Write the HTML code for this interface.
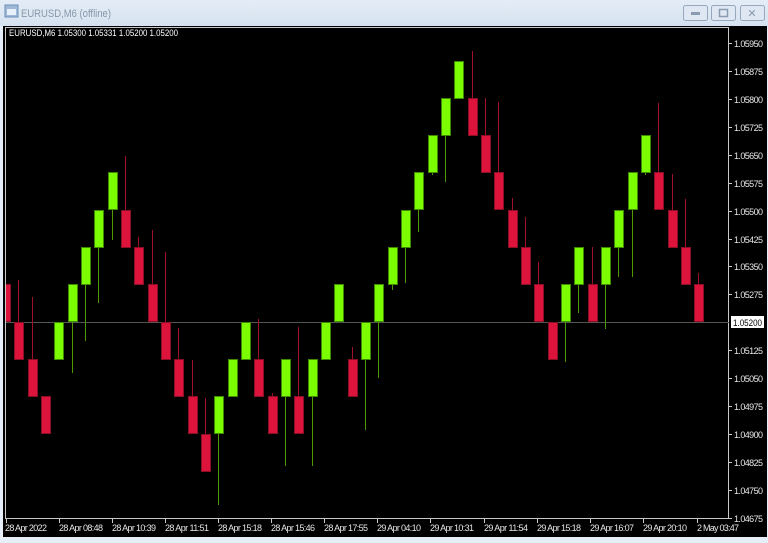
<!DOCTYPE html>
<html><head><meta charset="utf-8"><style>
html,body{margin:0;padding:0;background:#e6eef7;}
svg{display:block;}
text{font-family:"Liberation Sans",sans-serif;}
</style></head><body>
<svg width="768" height="543" viewBox="0 0 768 543" xmlns="http://www.w3.org/2000/svg">
<defs><linearGradient id="tb" x1="0" y1="0" x2="0" y2="1"><stop offset="0" stop-color="#e4edf7"/><stop offset="1" stop-color="#d6e2ef"/></linearGradient>
<clipPath id="pc"><rect x="6" y="28" width="723" height="491"/></clipPath></defs>
<rect x="0" y="0" width="768" height="543" fill="#e6eef7"/>
<rect x="0" y="0" width="768" height="26" fill="url(#tb)"/>
<rect x="5" y="5" width="13" height="12" fill="#9fb8d6" stroke="#6b8fb8" stroke-width="1"/>
<rect x="7" y="9" width="9" height="6" fill="#e8f0fa"/>
<text x="21" y="17" font-size="11" fill="#8797a8" textLength="90" lengthAdjust="spacingAndGlyphs">EURUSD,M6 (offline)</text>
<g fill="#dfe8f2" stroke="#98a9bd">
<rect x="683.5" y="5.5" width="24" height="15" rx="2"/><rect x="711.5" y="5.5" width="24" height="15" rx="2"/><rect x="740.5" y="5.5" width="24" height="15" rx="2"/></g>
<rect x="691" y="12" width="9" height="3" fill="#8a9ab0"/>
<rect x="719.5" y="9.5" width="8" height="7" fill="none" stroke="#8a9ab0" stroke-width="1.5"/>
<text x="752" y="17" font-size="11" fill="#8a9ab0" text-anchor="middle">✕</text>
<rect x="3" y="26" width="764" height="511" fill="#000"/>
<rect x="5.5" y="27.5" width="723" height="491" fill="none" stroke="#c8c8c8"/>
<text x="9" y="36" font-size="9" fill="#ffffff" textLength="169" lengthAdjust="spacingAndGlyphs">EURUSD,M6  1.05300 1.05331 1.05200 1.05200</text>
<line x1="6" y1="322.5" x2="729" y2="322.5" stroke="#555"/>
<g clip-path="url(#pc)">
<g fill="#a0102a">
<rect x="18" y="280" width="1" height="42"/><rect x="32" y="297" width="1" height="62"/>
<rect x="125" y="156" width="1" height="54"/><rect x="138" y="237" width="1" height="10"/><rect x="152" y="230" width="1" height="54"/><rect x="165" y="252" width="1" height="70"/><rect x="178" y="328" width="1" height="31"/><rect x="192" y="360" width="1" height="36"/><rect x="205" y="398" width="1" height="36"/>
<rect x="258" y="319" width="1" height="40"/><rect x="272" y="393" width="1" height="3"/><rect x="298" y="327" width="1" height="69"/><rect x="352" y="347" width="1" height="12"/>
<rect x="472" y="51" width="1" height="47"/><rect x="485" y="98" width="1" height="37"/><rect x="498" y="102" width="1" height="70"/><rect x="512" y="198" width="1" height="12"/><rect x="525" y="217" width="1" height="30"/><rect x="538" y="262" width="1" height="22"/>
<rect x="592" y="247" width="1" height="37"/><rect x="658" y="103" width="1" height="69"/><rect x="672" y="174" width="1" height="36"/><rect x="685" y="199" width="1" height="48"/><rect x="698" y="273" width="1" height="11"/>
</g>
<g fill="#4f9a00">
<rect x="72" y="321" width="1" height="52"/><rect x="85" y="284" width="1" height="57"/><rect x="98" y="247" width="1" height="56"/><rect x="112" y="210" width="1" height="30"/>
<rect x="218" y="433" width="1" height="72"/><rect x="285" y="396" width="1" height="70"/><rect x="312" y="396" width="1" height="70"/><rect x="365" y="359" width="1" height="71"/><rect x="378" y="321" width="1" height="57"/>
<rect x="392" y="284" width="1" height="6"/><rect x="405" y="247" width="1" height="36"/><rect x="418" y="210" width="1" height="22"/><rect x="432" y="172" width="1" height="3"/><rect x="445" y="135" width="1" height="47"/>
<rect x="565" y="321" width="1" height="41"/><rect x="578" y="284" width="1" height="29"/><rect x="605" y="284" width="1" height="45"/><rect x="618" y="247" width="1" height="30"/><rect x="632" y="210" width="1" height="67"/><rect x="645" y="172" width="1" height="3"/>
</g>
<g fill="#dc143c" stroke="#8b0f26" stroke-width="1">
<rect x="1.5" y="284.5" width="9" height="37"/><rect x="14.5" y="322.5" width="9" height="37"/><rect x="28.5" y="359.5" width="9" height="37"/><rect x="41.5" y="396.5" width="9" height="37"/>
<rect x="121.5" y="210.5" width="9" height="37"/><rect x="134.5" y="247.5" width="9" height="37"/><rect x="148.5" y="284.5" width="9" height="37"/><rect x="161.5" y="322.5" width="9" height="37"/><rect x="174.5" y="359.5" width="9" height="37"/><rect x="188.5" y="396.5" width="9" height="37"/><rect x="201.5" y="434.5" width="9" height="37"/>
<rect x="254.5" y="359.5" width="9" height="37"/><rect x="268.5" y="396.5" width="9" height="37"/><rect x="294.5" y="396.5" width="9" height="37"/><rect x="348.5" y="359.5" width="9" height="37"/>
<rect x="468.5" y="98.5" width="9" height="37"/><rect x="481.5" y="135.5" width="9" height="37"/><rect x="494.5" y="172.5" width="9" height="37"/><rect x="508.5" y="210.5" width="9" height="37"/><rect x="521.5" y="247.5" width="9" height="37"/><rect x="534.5" y="284.5" width="9" height="37"/><rect x="548.5" y="322.5" width="9" height="37"/>
<rect x="588.5" y="284.5" width="9" height="37"/><rect x="654.5" y="172.5" width="9" height="37"/><rect x="668.5" y="210.5" width="9" height="37"/><rect x="681.5" y="247.5" width="9" height="37"/><rect x="694.5" y="284.5" width="9" height="37"/>
</g>
<g fill="#7cfc00" stroke="#3f8a00" stroke-width="1">
<rect x="54.5" y="322.5" width="9" height="37"/><rect x="68.5" y="284.5" width="9" height="37"/><rect x="81.5" y="247.5" width="9" height="37"/><rect x="94.5" y="210.5" width="9" height="37"/><rect x="108.5" y="172.5" width="9" height="37"/>
<rect x="214.5" y="396.5" width="9" height="37"/><rect x="228.5" y="359.5" width="9" height="37"/><rect x="241.5" y="322.5" width="9" height="37"/>
<rect x="281.5" y="359.5" width="9" height="37"/><rect x="308.5" y="359.5" width="9" height="37"/><rect x="321.5" y="322.5" width="9" height="37"/><rect x="334.5" y="284.5" width="9" height="37"/>
<rect x="361.5" y="322.5" width="9" height="37"/><rect x="374.5" y="284.5" width="9" height="37"/><rect x="388.5" y="247.5" width="9" height="37"/><rect x="401.5" y="210.5" width="9" height="37"/><rect x="414.5" y="172.5" width="9" height="37"/><rect x="428.5" y="135.5" width="9" height="37"/><rect x="441.5" y="98.5" width="9" height="37"/><rect x="454.5" y="61.5" width="9" height="37"/>
<rect x="561.5" y="284.5" width="9" height="37"/><rect x="574.5" y="247.5" width="9" height="37"/><rect x="601.5" y="247.5" width="9" height="37"/><rect x="614.5" y="210.5" width="9" height="37"/><rect x="628.5" y="172.5" width="9" height="37"/><rect x="641.5" y="135.5" width="9" height="37"/>
</g>
</g>
<g stroke="#c8c8c8">
<line x1="729" y1="43.5" x2="732" y2="43.5"/><line x1="729" y1="71.5" x2="732" y2="71.5"/><line x1="729" y1="99.5" x2="732" y2="99.5"/><line x1="729" y1="127.5" x2="732" y2="127.5"/><line x1="729" y1="155.5" x2="732" y2="155.5"/><line x1="729" y1="183.5" x2="732" y2="183.5"/><line x1="729" y1="211.5" x2="732" y2="211.5"/><line x1="729" y1="239.5" x2="732" y2="239.5"/><line x1="729" y1="266.5" x2="732" y2="266.5"/><line x1="729" y1="294.5" x2="732" y2="294.5"/><line x1="729" y1="350.5" x2="732" y2="350.5"/><line x1="729" y1="378.5" x2="732" y2="378.5"/><line x1="729" y1="406.5" x2="732" y2="406.5"/><line x1="729" y1="434.5" x2="732" y2="434.5"/><line x1="729" y1="462.5" x2="732" y2="462.5"/><line x1="729" y1="490.5" x2="732" y2="490.5"/><line x1="729" y1="518.5" x2="732" y2="518.5"/>
<line x1="6.5" y1="519" x2="6.5" y2="523"/><line x1="59.5" y1="519" x2="59.5" y2="523"/><line x1="112.5" y1="519" x2="112.5" y2="523"/><line x1="165.5" y1="519" x2="165.5" y2="523"/><line x1="218.5" y1="519" x2="218.5" y2="523"/><line x1="271.5" y1="519" x2="271.5" y2="523"/><line x1="324.5" y1="519" x2="324.5" y2="523"/><line x1="377.5" y1="519" x2="377.5" y2="523"/><line x1="430.5" y1="519" x2="430.5" y2="523"/><line x1="484.5" y1="519" x2="484.5" y2="523"/><line x1="537.5" y1="519" x2="537.5" y2="523"/><line x1="590.5" y1="519" x2="590.5" y2="523"/><line x1="643.5" y1="519" x2="643.5" y2="523"/><line x1="697.5" y1="519" x2="697.5" y2="523"/>
</g>
<g font-size="9" fill="#e6e6e6" lengthAdjust="spacingAndGlyphs">
<text x="734" y="47" textLength="29">1.05950</text><text x="734" y="75" textLength="29">1.05875</text><text x="734" y="103" textLength="29">1.05800</text><text x="734" y="131" textLength="29">1.05725</text><text x="734" y="159" textLength="29">1.05650</text><text x="734" y="187" textLength="29">1.05575</text><text x="734" y="215" textLength="29">1.05500</text><text x="734" y="243" textLength="29">1.05425</text><text x="734" y="270" textLength="29">1.05350</text><text x="734" y="298" textLength="29">1.05275</text><text x="734" y="354" textLength="29">1.05125</text><text x="734" y="382" textLength="29">1.05050</text><text x="734" y="410" textLength="29">1.04975</text><text x="734" y="438" textLength="29">1.04900</text><text x="734" y="466" textLength="29">1.04825</text><text x="734" y="494" textLength="29">1.04750</text><text x="734" y="522" textLength="29">1.04675</text>
<text x="5" y="531" textLength="42">28 Apr 2022</text><text x="59" y="531" textLength="44">28 Apr 08:48</text><text x="112" y="531" textLength="44">28 Apr 10:39</text><text x="165" y="531" textLength="44">28 Apr 11:51</text><text x="218" y="531" textLength="44">28 Apr 15:18</text><text x="271" y="531" textLength="44">28 Apr 15:46</text><text x="324" y="531" textLength="44">28 Apr 17:55</text><text x="377" y="531" textLength="44">29 Apr 04:10</text><text x="430" y="531" textLength="44">29 Apr 10:31</text><text x="484" y="531" textLength="44">29 Apr 11:54</text><text x="537" y="531" textLength="44">29 Apr 15:18</text><text x="590" y="531" textLength="44">29 Apr 16:07</text><text x="643" y="531" textLength="44">29 Apr 20:10</text><text x="697" y="531" textLength="42">2 May 03:47</text>
</g>
<rect x="731" y="316" width="33" height="12" fill="#fff"/>
<text x="733" y="326" font-size="9" fill="#000" textLength="29" lengthAdjust="spacingAndGlyphs">1.05200</text>
</svg>
</body></html>
